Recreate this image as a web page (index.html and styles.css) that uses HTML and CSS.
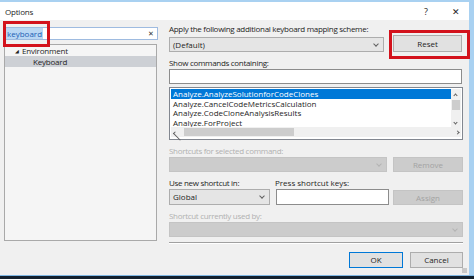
FILE: index.html
```html
<!DOCTYPE html>
<html lang="en">

<head>
    <meta charset="UTF-8">
    <meta name="viewport" content="width=device-width, initial-scale=1.0">
    <title>Options</title>
    <link rel="stylesheet" href="styles.css">
</head>

<body>

    <div class="screen">
        <div class="top-edge"></div>
        <div class="middle">
            <div class="dialog">
                <div class="titlebar">
                    <span class="title">Options</span>
                    <span class="help">?</span>
                    <span class="close">&#x2715;</span>
                </div>

                <div class="dialog-body">
                    <div class="left">
                        <div class="search">
                            <span class="search-text"><span class="search-sel">keyboard</span></span>
                            <span class="search-clear">&#x2715;</span>
                        </div>
                        <div class="tree">
                            <div class="tree-row"><span class="expander">&#x25E2;</span>Environment</div>
                            <div class="tree-row child selected">Keyboard</div>
                        </div>
                        <div class="callout callout-search"></div>
                    </div>

                    <div class="right">
                        <div class="label">Apply the following additional keyboard mapping scheme:</div>
                        <div class="row row-scheme">
                            <div class="combo combo-scheme">(Default)<span class="chev"></span></div>
                            <div class="btn btn-reset">Reset</div>
                            <div class="callout callout-reset"></div>
                        </div>

                        <div class="label">Show commands containing:</div>
                        <div class="textbox textbox-wide"></div>

                        <div class="list">
                            <div class="list-main">
                                <div class="list-rows">
                                    <div class="list-row selected">Analyze.AnalyzeSolutionforCodeClones</div>
                                    <div class="list-row">Analyze.CancelCodeMetricsCalculation</div>
                                    <div class="list-row">Analyze.CodeCloneAnalysisResults</div>
                                    <div class="list-row">Analyze.ForProject</div>
                                </div>
                                <div class="vscroll">
                                    <span class="arrow up"></span>
                                    <span class="vthumb"></span>
                                    <span class="arrow down"></span>
                                </div>
                            </div>
                            <div class="hscroll">
                                <span class="arrow left"></span>
                                <span class="hthumb"></span>
                                <span class="arrow right"></span>
                            </div>
                        </div>

                        <div class="label disabled">Shortcuts for selected command:</div>
                        <div class="row">
                            <div class="combo combo-shortcuts off"><span class="chev"></span></div>
                            <div class="btn off">Remove</div>
                        </div>

                        <div class="row labels">
                            <div class="label label-scope">Use new shortcut in:</div>
                            <div class="label label-keys">Press shortcut keys:</div>
                        </div>
                        <div class="row row-new">
                            <div class="combo combo-scope">Global<span class="chev"></span></div>
                            <div class="textbox textbox-keys"></div>
                            <div class="btn off btn-assign">Assign</div>
                        </div>

                        <div class="label disabled">Shortcut currently used by:</div>
                        <div class="combo combo-used off"><span class="chev"></span></div>

                        <div class="separator"></div>

                        <div class="row actions">
                            <div class="btn btn-ok">OK</div>
                            <div class="btn btn-cancel">Cancel</div>
                        </div>
                    </div>
                </div>
                <div class="grip"></div>
            </div>
            <div class="right-edge"></div>
        </div>
        <div class="taskbar"></div>
    </div>

</body>

</html>
```

FILE: styles.css
```css
body {
    margin: 0;
    font-family: "Open Sans", "Noto Sans", sans-serif;
    font-size: 8px;
    color: #1e1e1e;
    background-color: #13202d;
}

.screen {
    width: 474px;
    height: 279px;
    display: flex;
    flex-direction: column;
    overflow: hidden;
}

.top-edge {
    height: 2px;
    background: #a9d1f1;
}

.middle {
    display: flex;
    height: 273px;
}

.dialog {
    position: relative;
    width: 469px;
    background: #f0f0f0;
}

.right-edge {
    flex: 1;
    background: #a9d1f1;
}

.taskbar {
    height: 3px;
    border-top: 1px solid #7fb6e2;
    background: #13202d;
}

/* title bar */

.titlebar {
    height: 18px;
    background: #fff;
    display: flex;
    align-items: center;
    padding-left: 5px;
}

.title {
    flex: 1;
    letter-spacing: -0.2px;
}

.help {
    width: 28px;
    font-size: 9px;
}

.close {
    width: 17px;
    font-size: 9px;
}

.dialog-body {
    display: flex;
    padding-left: 3px;
}

/* left pane */

.left {
    position: relative;
    width: 155px;
    padding-top: 7px;
}

.search {
    height: 11px;
    background: #fff;
    border: 1px solid #9ebbe0;
    display: flex;
    align-items: center;
    padding: 0 3px;
}

.search-text {
    flex: 1;
    line-height: 10px;
}

.search-sel {
    background: #b9d7f4;
    color: #2160b5;
    padding: 0 1px;
    margin-left: -1px;
}

.search-clear {
    font-size: 7px;
    color: #333;
}

.tree {
    margin: 4px 1px 0;
    height: 197px;
    background: #f5f5f5;
    border: 1px solid #a9a9a9;
    padding-top: 1px;
    box-sizing: border-box;
}

.tree-row {
    height: 10px;
    line-height: 10px;
    padding-left: 10px;
    letter-spacing: -0.2px;
}

.tree-row.child {
    height: 11px;
    line-height: 11px;
    padding-left: 28px;
}

.tree-row.selected {
    background: #cdd0d5;
}

.expander {
    font-size: 5px;
    display: inline-block;
    width: 4px;
    margin-right: 3px;
    vertical-align: 1px;
}

.callout {
    position: absolute;
    border: 3px solid #d3121c;
    box-sizing: border-box;
}

.callout-search {
    left: 0;
    top: 1px;
    width: 47px;
    height: 26px;
}

.callout-reset {
    right: -7px;
    top: -5px;
    width: 81px;
    height: 29px;
}

/* right pane */

.right {
    width: 294px;
    margin-left: 11px;
}

.label {
    height: 10px;
    line-height: 10px;
    margin-top: 6px;
    margin-bottom: 1px;
    white-space: nowrap;
    letter-spacing: -0.3px;
}

.label:first-child {
    margin-top: 4px;
}

.label.disabled {
    color: #b0b0b0;
}

.row {
    display: flex;
    justify-content: space-between;
    align-items: flex-end;
}

.row-scheme {
    position: relative;
    height: 17px;
}

.labels {
    justify-content: flex-start;
}

.label-scope {
    width: 106px;
}

.label-keys {
    letter-spacing: 0;
}

.combo {
    position: relative;
    box-sizing: border-box;
    height: 15px;
    line-height: 13px;
    padding-left: 3px;
    background: #e5e5e5;
    border: 1px solid #adadad;
}

.combo.off {
    background: #cccccc;
    border-color: #c4c4c4;
}

.chev {
    position: absolute;
    right: 5px;
    top: 4px;
    width: 3px;
    height: 3px;
    border-right: 1px solid #606060;
    border-bottom: 1px solid #606060;
    transform: rotate(45deg);
}

.combo.off .chev {
    border-color: #b4b4b4;
}

.combo-scheme {
    width: 215px;
}

.combo-shortcuts {
    width: 218px;
}

.combo-scope {
    width: 101px;
    height: 16px;
    line-height: 14px;
    flex: none;
}

.combo-used {
    width: 294px;
}

.btn {
    box-sizing: border-box;
    width: 70px;
    height: 15px;
    line-height: 13px;
    text-align: center;
    background: #e1e1e1;
    border: 1px solid #adadad;
}

.btn.off {
    background: #cccccc;
    border-color: #c4c4c4;
    color: #a3a3a3;
}

.btn-reset {
    width: 69px;
    height: 17px;
    line-height: 15px;
    margin-right: 1px;
}

.textbox {
    box-sizing: border-box;
    height: 15px;
    background: #fff;
    border: 1px solid #8c8c8c;
}

.textbox-wide {
    width: 293px;
}

.row-new {
    height: 16px;
}

.textbox-keys {
    width: 113px;
    height: 16px;
    margin-left: 5px;
    margin-right: 4px;
}

.btn-assign {
    flex: none;
}

/* command list */

.list {
    box-sizing: border-box;
    margin-top: 3px;
    height: 53px;
    width: 294px;
    background: #fff;
    border: 1px solid #828790;
    padding: 1px;
}

.list-main {
    display: flex;
    height: 38px;
}

.list-rows {
    flex: 1;
}

.list-row {
    height: 9.5px;
    line-height: 9.5px;
    padding-left: 2px;
    white-space: nowrap;
}

.list-row.selected {
    background: #0078d7;
    color: #fff;
}

.vscroll {
    width: 10px;
    background: #f0f0f0;
    position: relative;
}

.vthumb {
    position: absolute;
    left: 1px;
    top: 11px;
    width: 8px;
    height: 10px;
    background: #cdcdcd;
}

.hscroll {
    position: relative;
    height: 10px;
    background: #f0f0f0;
}

.hthumb {
    position: absolute;
    left: 13px;
    top: 1px;
    width: 110px;
    height: 8px;
    background: #cdcdcd;
}

.arrow {
    position: absolute;
    width: 2px;
    height: 2px;
    border-left: 1px solid #606060;
    border-top: 1px solid #606060;
}

.arrow.up {
    left: 3px;
    top: 5px;
    transform: rotate(45deg);
}

.arrow.down {
    left: 3px;
    top: 32px;
    transform: rotate(225deg);
}

.arrow.left {
    left: 5px;
    top: 4px;
    transform: rotate(-45deg);
}

.arrow.right {
    left: 274px;
    top: 4px;
    transform: rotate(135deg);
}

.separator {
    margin-top: 5px;
    height: 1px;
    background: #a0a0a0;
    border-bottom: 1px solid #fff;
}

.actions {
    justify-content: flex-end;
    margin-top: 8px;
    gap: 7px;
}

.btn-ok {
    width: 54px;
    height: 16px;
    line-height: 14px;
    border-color: #0078d7;
}

.btn-cancel {
    width: 53px;
    height: 16px;
    line-height: 14px;
}

.grip {
    position: absolute;
    right: 2px;
    bottom: 2px;
    width: 5px;
    height: 5px;
    background: radial-gradient(circle, #9a9a9a 0.6px, transparent 0.8px) 0 0 / 2px 2px;
}
```
